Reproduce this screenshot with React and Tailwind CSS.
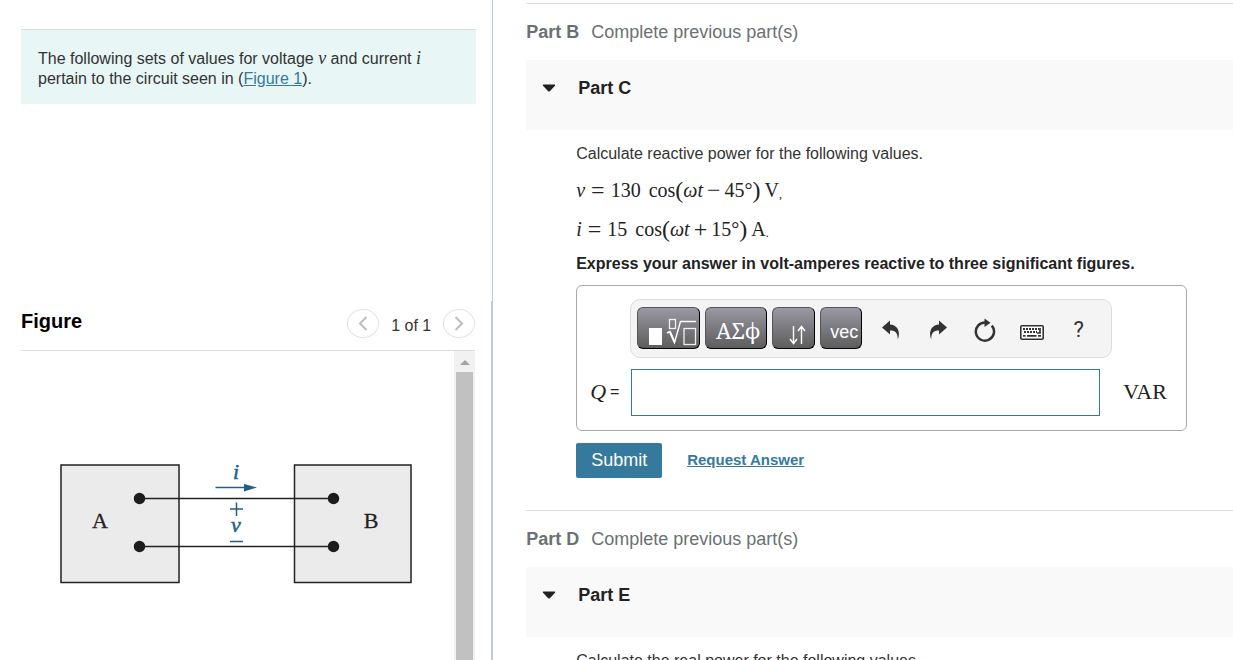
import React, { useState } from 'react'

const Var = ({ children }) => <i className="text-lg leading-5 font-['Liberation_Serif',serif]">{children}</i>;

const MathLine = ({ name, amp, sign, angle, unit, end }) => (
  <p className="flex items-center h-6 text-xl text-[#222] font-['Liberation_Serif',serif]">
    <i>{name}</i>
    <span className="mx-1.5 text-2xl leading-6">=</span>
    <span>{amp}</span>
    <span className="ml-2">cos</span>
    <span className="text-2xl leading-6">(</span>
    <i>ωt</i>
    <span className="mx-1 text-2xl leading-6">{sign}</span>
    <span>{angle}°</span>
    <span className="text-2xl leading-6">)</span>
    <span className="ml-1">{unit}</span>
    <span className="text-xs pt-2">{end}</span>
  </p>
);

const Caret = () => (
  <svg width="14" height="8" viewBox="0 0 14 8" aria-hidden="true">
    <path d="M1.4 0.5h11.2q1.1 0.4 0.4 1.2L7.8 7.2q-0.8 0.7-1.6 0L1 1.7Q0.3 0.9 1.4 0.5z" fill="#222" />
  </svg>
);

const LockedPart = ({ title }) => (
  <div className="h-[57px] border-t border-[#dedede] flex items-center gap-3 text-lg text-[#6a7172]">
    <h2 className="font-bold">{title}</h2>
    <p>Complete previous part(s)</p>
  </div>
);

const PartHeader = ({ title }) => (
  <div className="h-[70px] bg-[#f9f9f9] pt-3.5 pl-4">
    <button className="flex items-center gap-[22px] text-lg leading-7 font-bold text-[#222] cursor-pointer">
      <Caret />
      {title}
    </button>
  </div>
);

const DarkButton = ({ label, width, children }) => (
  <button
    aria-label={label}
    className={`${width} h-[42px] shrink-0 mr-[5px] rounded-md border border-t-[#555] border-l-[#555] border-r-black border-b-black bg-linear-to-b from-[#9b98a4] to-[#5d5d5d] text-white overflow-hidden cursor-pointer`}
  >
    {children}
  </button>
);

const ToolButton = ({ label, children }) => (
  <button aria-label={label} className="w-[47px] h-[42px] shrink-0 pt-1 flex items-center justify-center text-[#333] cursor-pointer">
    {children}
  </button>
);

const Toolbar = () => (
  <div className="ml-[53px] w-[482px] max-w-full h-[59px] p-[6px] pt-[7px] flex rounded-[10px] border border-[#dcdcdc] bg-[#f4f4f4]">
    <DarkButton label="Templates" width="w-[63px]">
      <svg width="61" height="40" viewBox="0 0 61 40" fill="none">
        <rect x="11" y="20" width="13" height="17" fill="#fff" />
        <rect x="31.5" y="11.5" width="6" height="9" stroke="#fff" strokeWidth="1.3" strokeOpacity="0.9" />
        <path d="M29 25l3-1.500 4.500 11L42.500 13.500H58" stroke="#fff" strokeWidth="1.4" />
        <path d="M32 24l4.500 10" stroke="#fff" strokeWidth="2" />
        <rect x="46" y="20.500" width="11.500" height="16" stroke="#fff" strokeWidth="1.300" strokeOpacity="0.9" />
      </svg>
    </DarkButton>
    <DarkButton label="Symbols" width="w-[62px]">
      <span className="block pl-1 pt-1 text-[22px] leading-7 font-['Noto_Serif','Liberation_Serif',serif]">ΑΣϕ</span>
    </DarkButton>
    <DarkButton label="Arrows" width="w-[43px]">
      <svg width="41" height="40" viewBox="0 0 41 40" fill="none" stroke="#fff" strokeWidth="1.4">
        <path d="M20.500 18v17M17 31l3.500 4.500L24 31" />
        <path d="M28.500 36V19M25 23l3.500-4.500L32 23" />
      </svg>
    </DarkButton>
    <DarkButton label="Vectors" width="w-[42px]">
      <span className="block pl-1.5 pt-2 text-lg leading-7 font-['Liberation_Sans',sans-serif]">vec</span>
    </DarkButton>
    <ToolButton label="Undo">
      <svg width="18" height="20" viewBox="0 0 18 20" fill="currentColor">
        <path d="M0 7.500L8 0.500V4.500C15 5 19 11 15.800 19.500C15.800 13 13.500 10.600 8 10.600V14.500z" />
      </svg>
    </ToolButton>
    <ToolButton label="Redo">
      <svg width="18" height="20" viewBox="0 0 18 20" fill="currentColor">
        <path d="M18 7.500L10 0.500V4.500C3 5-1 11 2.200 19.500C2.200 13 4.500 10.600 10 10.600V14.500z" />
      </svg>
    </ToolButton>
    <ToolButton label="Reset">
      <svg width="22" height="24" viewBox="0 0 22 24" fill="none">
        <path d="M17.800 7.600A9.100 9.100 0 1 1 11.500 4.500" stroke="currentColor" strokeWidth="2.500" />
        <path d="M10.500 0.500L16.500 4.800L10.500 9z" fill="currentColor" />
      </svg>
    </ToolButton>
    <ToolButton label="Keyboard">
      <svg width="24" height="22" viewBox="0 0 24 22" fill="none">
        <rect x="0.800" y="6.800" width="22.400" height="13.400" rx="1" fill="#fff" stroke="currentColor" strokeWidth="1.600" />
        <path d="M3 10h16M4 13h13" stroke="currentColor" strokeWidth="2" strokeDasharray="2 1" />
        <path d="M3 16.800h2.500M7 16.800h9.500M18 16.800h3M20 9v5h-3" stroke="currentColor" strokeWidth="1.700" />
      </svg>
    </ToolButton>
    <ToolButton label="Help">
      <span className="text-[22px] leading-6 font-['Roboto',sans-serif]">?</span>
    </ToolButton>
  </div>
);

const Circuit = () => (
  <svg width="352" height="130" viewBox="0 -10 352 130" role="img" aria-label="Circuit with boxes A and B" className="shrink-0">
    <g fill="#ebebeb" stroke="#222" strokeWidth="1.500">
      <rect x="1" y="1" width="118" height="117.500" />
      <rect x="234.500" y="1" width="116.500" height="117.500" />
    </g>
    <path d="M79 34.500H273M79 82.500H273" stroke="#222" strokeWidth="1.500" />
    <g fill="#1c1c1c">
      <circle cx="79.500" cy="34.500" r="5.700" />
      <circle cx="79.500" cy="82.500" r="5.700" />
      <circle cx="273.500" cy="34.500" r="5.700" />
      <circle cx="273.500" cy="82.500" r="5.700" />
    </g>
    <g stroke="#215f8b" strokeWidth="1.500">
      <path d="M155.500 23.500H186" />
      <path d="M170 45H183M176.500 38.500V52M170 77.500H183" />
    </g>
    <path d="M184 20L197 23.500L184 27.500z" fill="#215f8b" />
    <g className="font-['Liberation_Serif',serif]" fontSize="22" textAnchor="middle">
      <g fill="#222" stroke="#222" strokeWidth="0.300">
        <text x="40" y="64">A</text>
        <text x="311" y="64">B</text>
      </g>
      <g fill="#215f8b" stroke="#215f8b" strokeWidth="0.500" fontStyle="italic">
        <text x="176" y="15">i</text>
        <text x="176" y="68">v</text>
      </g>
    </g>
  </svg>
);

const PagerButton = ({ label, d }) => (
  <button aria-label={label} className="w-8 h-[29px] rounded-[50%] border border-[#e2e2e2] flex items-center justify-center cursor-pointer">
    <svg width="10" height="15" viewBox="0 0 10 15" fill="none" stroke="#bdbdbd" strokeWidth="2">
      <path d={d} />
    </svg>
  </button>
);

const FigurePane = () => (
  <section className="flex-1 min-h-0 flex flex-col pl-[21px] pr-4 border-r-2 border-[#bccbdd]">
    <div className="h-[50px] shrink-0 flex items-center justify-between border-b border-[#dcdcdc]">
      <h2 className="text-xl font-bold text-black pb-2.5">Figure</h2>
      <div className="flex items-center gap-3 pb-1 text-[#333]">
        <PagerButton label="Previous figure" d="M8.500 1L2 7.500L8.500 14" />
        <span className="pt-1">1 of 1</span>
        <PagerButton label="Next figure" d="M1.500 1L8 7.500L1.500 14" />
      </div>
    </div>
    <div className="flex-1 min-h-0 flex overflow-hidden">
      <div className="flex-1 pt-[103px] pl-[39px]">
        <Circuit />
      </div>
      <div className="w-[21px] shrink-0 bg-[#f1f1f1] flex flex-col items-center">
        <svg width="10" height="21" viewBox="0 0 10 21" className="shrink-0">
          <path d="M0 14L5 9L10 14z" fill="#a3a3a3" />
        </svg>
        <div className="flex-1 w-[17px] bg-[#c1c1c1]" />
      </div>
    </div>
  </section>
);

export default function App() {
  const [answer, setAnswer] = useState("");

  return (
    <div className="h-screen flex overflow-hidden bg-white text-[#333] text-base leading-5 font-['Liberation_Sans',Arial,sans-serif]">
      {/* LEFT PANE */}
      <aside className="w-2/5 shrink-0 flex flex-col">
        <section className="h-[301px] shrink-0 pt-[29px] pl-[21px] pr-4 border-r border-[#bccbdd]">
          <div className="border-t border-[#d9dfde] bg-[#e8f6f6] px-[17px] pt-[18px] pb-[15px]">
            <p>
              The following sets of values for voltage <Var>v</Var> and current <Var>i</Var>
              <br />
              pertain to the circuit seen in (<a href="#figure" className="text-[#357a9c] underline">Figure 1</a>).
            </p>
          </div>
        </section>
        <FigurePane />
      </aside>

      {/* RIGHT PANE */}
      <main className="flex-1 min-w-0 pl-[33px] pt-[3px] overflow-hidden">
        <LockedPart title="Part B" />
        <PartHeader title="Part C" />

        <div className="pl-[50px] pt-[14px] h-[380px]">
          <p>Calculate reactive power for the following values.</p>
          <div className="pt-[14px] flex flex-col gap-[15px]">
            <MathLine name="v" amp="130" sign="−" angle="45" unit="V" end="," />
            <MathLine name="i" amp="15" sign="+" angle="15" unit="A" end="." />
          </div>
          <p className="pt-[13px] font-bold text-[#222]">Express your answer in volt-amperes reactive to three significant figures.</p>

          <div className="mt-[11px] w-[611px] max-w-full h-[146px] rounded-md border border-[#aaa] pt-[13px]">
            <Toolbar />
            <div className="mt-[11px] flex items-center pl-[13px]">
              <label htmlFor="answer" className="w-10 shrink-0 flex items-center gap-1 pb-0.5 text-[#222]">
                <i className="text-[22px] font-['Liberation_Serif',serif]">Q</i> =
              </label>
              <input
                id="answer"
                type="text"
                value={answer}
                onChange={(e) => setAnswer(e.target.value)}
                className="ml-px w-[469px] h-[47px] border border-[#357a93] px-2 outline-none"
              />
              <span className="ml-[23px] pb-0.5 text-[22px] text-[#222] font-['Liberation_Serif',serif]">VAR</span>
            </div>
          </div>

          <div className="mt-3 flex items-center">
            <button className="w-[86px] h-[35px] pb-0.5 rounded-xs bg-[#357a9c] text-white text-lg leading-5 cursor-pointer">Submit</button>
            <a href="#answer" className="ml-[25px] pb-0.5 text-[15px] font-bold text-[#357a9c] underline">Request Answer</a>
          </div>
        </div>

        <LockedPart title="Part D" />
        <PartHeader title="Part E" />
        <div className="pl-[50px] pt-[14px]">
          <p>Calculate the real power for the following values.</p>
        </div>
      </main>
    </div>
  );
}
